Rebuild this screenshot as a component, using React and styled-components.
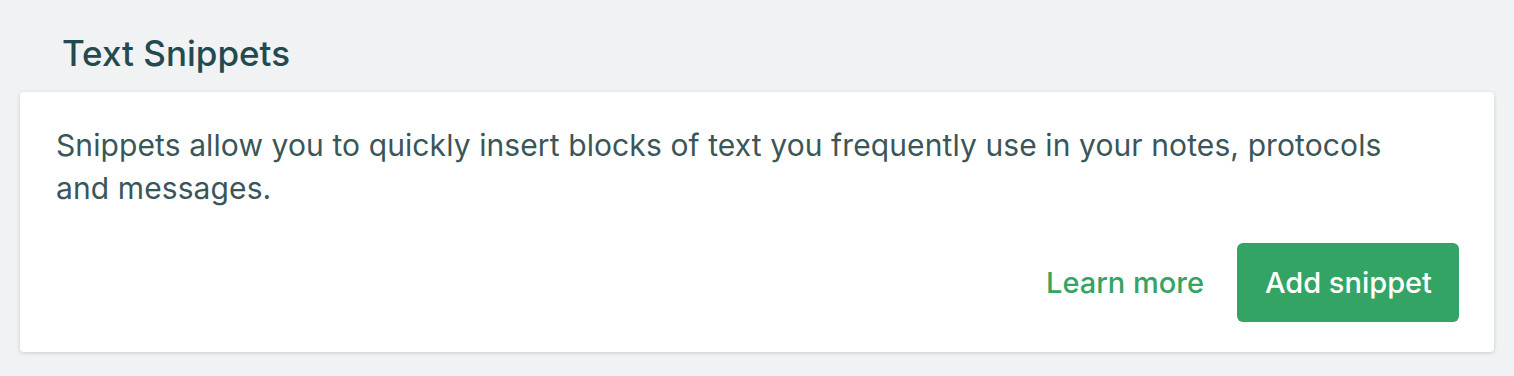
import React from 'react';
import styled, { createGlobalStyle } from 'styled-components';

const Global = createGlobalStyle`
  html, body {
    margin: 0;
    background: #f1f2f4;
    font-family: Inter, "Noto Sans", sans-serif;
  }
`;

const Page = styled.div`
  padding: 32px 20px 20px;
`;

const Title = styled.h2`
  margin: 0 0 18px 42px;
  font-size: 35px;
  line-height: 42px;
  font-weight: 500;
  color: #234a4f;
`;

const Card = styled.section`
  background: #fff;
  border-radius: 4px;
  box-shadow: 0 1px 4px rgba(0, 0, 0, 0.16);
  padding: 32px 35px 30px 36px;
`;

const Text = styled.p`
  margin: 0;
  font-size: 30px;
  letter-spacing: 0.1px;
  line-height: 43px;
  color: #3a5659;
  max-width: 1380px;
`;

const Actions = styled.div`
  display: flex;
  justify-content: flex-end;
  align-items: center;
  gap: 33px;
  margin-top: 33px;
`;

const LinkButton = styled.a`
  font-size: 29px;
  font-weight: 500;
  color: #34a464;
  text-decoration: none;
  cursor: pointer;
`;

const Button = styled.button`
  font-family: inherit;
  font-size: 29px;
  font-weight: 500;
  color: #fff;
  background: #34a464;
  border: none;
  border-radius: 6px;
  height: 79px;
  padding: 0 27px 0 28px;
  cursor: pointer;
`;

export default function App() {
  return (
    <Page>
      <Global />
      <Title>Text Snippets</Title>
      <Card>
        <Text>
          Snippets allow you to quickly insert blocks of text you frequently use in your notes, protocols and messages.
        </Text>
        <Actions>
          <LinkButton>Learn more</LinkButton>
          <Button>Add snippet</Button>
        </Actions>
      </Card>
    </Page>
  );
}
